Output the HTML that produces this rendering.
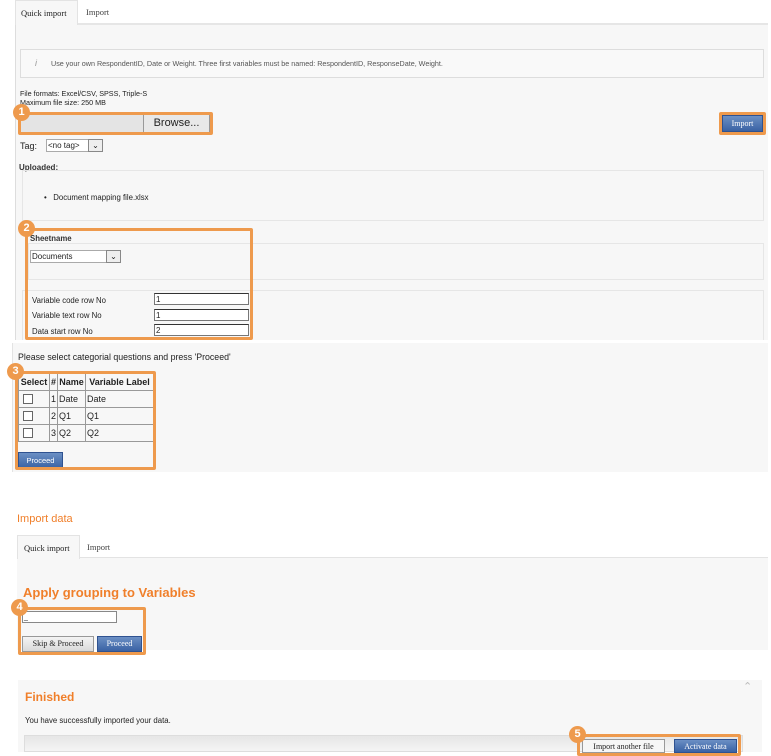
<!DOCTYPE html>
<html><head><meta charset="utf-8"><style>
*{box-sizing:border-box;margin:0;padding:0}
body{width:771px;height:752px;background:#fff;position:relative;overflow:hidden;font-family:"Liberation Sans",sans-serif;color:#222}
.a{position:absolute}
.p{background:#f7f7f7}
.t{font-size:8px;white-space:nowrap}
.ob{border:3px solid #ee9a4d;position:absolute;border-radius:2px}
.bd{position:absolute;width:17px;height:17px;border-radius:50%;background:#ee9a4d;color:#fff;font-weight:bold;font-size:11px;text-align:center;line-height:17px}
.blue{background:linear-gradient(#6b8fc4,#3a62a4);color:#fff;border:1px solid #2f5290;font-family:"Liberation Serif",serif;font-size:8px;text-align:center}
.grey{background:linear-gradient(#f4f4f4,#d9d9d9);border:1px solid #999;font-family:"Liberation Serif",serif;font-size:8px;text-align:center;color:#222}
.inp{background:#fff;border:1px solid #777;border-top-color:#333;font-size:8px;padding-left:1px}
.or{color:#f07f2a;font-weight:bold}
table{border-collapse:collapse;font-size:9px;white-space:nowrap}
td,th{border:1px solid #999;padding:0 1px;height:17px;white-space:nowrap}
</style></head><body>
<div class="a p" style="left:15px;top:24px;width:753px;height:316px;border-left:1px solid #ddd"></div>
<div class="a" style="left:15px;top:23px;width:753px;height:2px;background:#e6e6e6"></div>
<div class="a t" style="left:15px;top:0;width:63px;height:25px;background:#f7f7f7;border:1px solid #e3e3e3;border-bottom:none;font-family:'Liberation Serif',serif;line-height:24px;padding-left:5px;font-size:8.5px">Quick import</div>
<div class="a t" style="left:79px;top:0;width:40px;height:24px;font-family:'Liberation Serif',serif;line-height:24px;padding-left:7px;color:#444;font-size:8.5px">Import</div>
<div class="a" style="left:20px;top:49px;width:744px;height:29px;border:1px solid #ddd;background:#f9f9f9"></div>
<div class="a t" style="left:35px;top:58px;color:#999;font-size:9px;font-style:italic">i</div>
<div class="a t" style="left:51px;top:59px;color:#555;font-size:7.2px">Use your own RespondentID, Date or Weight. Three first variables must be named: RespondentID, ResponseDate, Weight.</div>
<div class="a t" style="left:20px;top:89px;font-size:7.2px">File formats: Excel/CSV, SPSS, Triple-S</div>
<div class="a t" style="left:20px;top:98px;font-size:7.2px">Maximum file size: 250 MB</div>
<div class="a" style="left:20px;top:114px;width:123px;height:19px;background:#e4e4e4"></div>
<div class="a grey" style="left:143px;top:114px;width:67px;height:19px;font-family:'Liberation Sans',sans-serif;font-size:11px;line-height:17px;background:#e8e8e8">Browse...</div>
<div class="ob" style="left:18px;top:112px;width:195px;height:23px"></div>
<div class="bd" style="left:13px;top:104px">1</div>
<div class="a blue" style="left:722px;top:115px;width:41px;height:17px;line-height:15px">Import</div>
<div class="ob" style="left:719px;top:112px;width:47px;height:23px"></div>
<div class="a t" style="left:20px;top:141px;font-size:9px">Tag:</div>
<div class="a inp" style="left:46px;top:139px;width:57px;height:13px;border-color:#aaa;line-height:11px">&lt;no tag&gt;</div>
<div class="a" style="left:88px;top:139px;width:15px;height:13px;border:1px solid #888;background:#eee;font-size:8px;text-align:center;line-height:11px">&#8964;</div>
<div class="a t" style="left:19px;top:163px;font-weight:bold;color:#333">Uploaded:</div>
<div class="a" style="left:22px;top:170px;width:742px;height:51px;border:1px solid #e6e6e6"></div>
<div class="a t" style="left:44px;top:193px;font-size:7.8px">•&nbsp;&nbsp; Document mapping file.xlsx</div>
<div class="a" style="left:28px;top:243px;width:736px;height:37px;border:1px solid #e6e6e6"></div>
<div class="a t" style="left:30px;top:234px;font-weight:bold;color:#333;font-size:7.8px;background:#f7f7f7;padding-right:3px">Sheetname</div>
<div class="a inp" style="left:30px;top:250px;width:91px;height:13px;border-color:#aaa;line-height:11px">Documents</div>
<div class="a" style="left:106px;top:250px;width:15px;height:13px;border:1px solid #888;background:#eee;font-size:8px;text-align:center;line-height:11px">&#8964;</div>
<div class="a" style="left:22px;top:290px;width:742px;height:50px;border:1px solid #e6e6e6;border-bottom:none"></div>
<div class="a t" style="left:32px;top:296px;font-size:7.8px">Variable code row No</div>
<div class="a t" style="left:32px;top:311px;font-size:7.8px">Variable text row No</div>
<div class="a t" style="left:32px;top:327px;font-size:7.8px">Data start row No</div>
<div class="a inp" style="left:154px;top:293px;width:95px;height:12px;line-height:12px">1</div>
<div class="a inp" style="left:154px;top:309px;width:95px;height:12px;line-height:12px">1</div>
<div class="a inp" style="left:154px;top:324px;width:95px;height:12px;line-height:12px">2</div>
<div class="ob" style="left:25px;top:228px;width:228px;height:112px"></div>
<div class="bd" style="left:18px;top:220px">2</div>
<div class="a p" style="left:12px;top:343px;width:756px;height:129px;border-left:1px solid #e3e3e3"></div>
<div class="a t" style="left:18px;top:352px;font-size:8.8px">Please select categorial questions and press 'Proceed'</div>
<table class="a" style="left:18px;top:373px">
<tr><th style="height:15px;width:31px">Select</th><th style="width:8px">#</th><th style="width:28px">Name</th><th style="width:68px">Variable Label</th></tr>
<tr><td><div style="width:10px;height:10px;border:1px solid #666;background:#fff;margin-left:3px"></div></td><td style="text-align:right">1</td><td>Date</td><td>Date</td></tr>
<tr><td><div style="width:10px;height:10px;border:1px solid #666;background:#fff;margin-left:3px"></div></td><td style="text-align:right">2</td><td>Q1</td><td>Q1</td></tr>
<tr><td><div style="width:10px;height:10px;border:1px solid #666;background:#fff;margin-left:3px"></div></td><td style="text-align:right">3</td><td>Q2</td><td>Q2</td></tr>
</table>
<div class="a blue" style="left:18px;top:452px;width:45px;height:17px;line-height:15px;font-family:'Liberation Sans',sans-serif;font-size:7.5px">Proceed</div>
<div class="ob" style="left:15px;top:371px;width:141px;height:99px"></div>
<div class="bd" style="left:7px;top:363px">3</div>
<div class="a" style="left:17px;top:513px;font-size:11px;color:#f07f2a">Import data</div>
<div class="a p" style="left:17px;top:558px;width:751px;height:92px"></div>
<div class="a" style="left:17px;top:557px;width:751px;height:1px;background:#e3e3e3"></div>
<div class="a t" style="left:17px;top:535px;width:63px;height:24px;background:#f7f7f7;border:1px solid #e3e3e3;border-bottom:none;font-family:'Liberation Serif',serif;line-height:24px;padding-left:6px;font-size:8.5px">Quick import</div>
<div class="a t" style="left:80px;top:535px;width:40px;height:23px;font-family:'Liberation Serif',serif;line-height:24px;padding-left:7px;color:#444;font-size:8.5px">Import</div>
<div class="a or" style="left:23px;top:585px;font-size:13px">Apply grouping to Variables</div>
<div class="a inp" style="left:22px;top:611px;width:95px;height:12px;border-color:#888;font-size:7px;line-height:11px">_</div>
<div class="a grey" style="left:22px;top:636px;width:72px;height:16px;line-height:14px">Skip &amp; Proceed</div>
<div class="a blue" style="left:97px;top:636px;width:45px;height:16px;line-height:14px">Proceed</div>
<div class="ob" style="left:18px;top:607px;width:128px;height:48px"></div>
<div class="bd" style="left:11px;top:599px">4</div>
<div class="a p" style="left:18px;top:680px;width:744px;height:72px"></div>
<div class="a" style="left:743px;top:680px;width:15px;height:15px;color:#bbb;font-size:11px">&#8963;</div>
<div class="a or" style="left:25px;top:690px;font-size:12px">Finished</div>
<div class="a t" style="left:25px;top:716px;font-size:7.8px">You have successfully imported your data.</div>
<div class="a" style="left:24px;top:735px;width:719px;height:17px;background:linear-gradient(#e6e6e6,#f4f4f4);border:1px solid #ddd"></div>
<div class="a grey" style="left:582px;top:739px;width:83px;height:14px;line-height:13px;background:#f6f6f6">Import another file</div>
<div class="a blue" style="left:674px;top:739px;width:63px;height:14px;line-height:13px">Activate data</div>
<div class="ob" style="left:577px;top:734px;width:164px;height:22px"></div>
<div class="bd" style="left:569px;top:726px">5</div>
</body></html>
